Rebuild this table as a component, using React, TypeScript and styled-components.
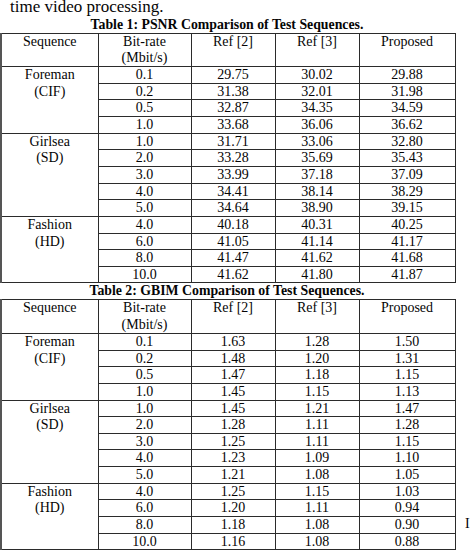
import React from "react";
import styled, { createGlobalStyle } from "styled-components";

const GlobalStyle = createGlobalStyle`
  html, body {
    margin: 0;
    padding: 0;
    background: #ffffff;
  }
  body {
    font-family: "Liberation Serif", "Times New Roman", serif;
    color: #050505;
    overflow: hidden;
  }
`;

const Page = styled.div`
  display: grid;
  grid-template-columns: 454px 1fr;
  width: 474px;
  height: 551px;
`;

const Main = styled.div`
  display: flex;
  flex-direction: column;
`;

const Side = styled.div`
  display: flex;
  flex-direction: column;
  justify-content: flex-end;
  padding: 0 0 19px 11px;
`;

const Fragment = styled.span`
  font-size: 14px;
  line-height: 16px;
`;

const Intro = styled.p`
  margin: -1.7px 0 0 10px;
  font-size: 17px;
  line-height: 17px;
  white-space: nowrap;
`;

const Caption = styled.div<{ $top: number }>`
  margin-top: ${(p) => p.$top}px;
  text-align: center;
  font-weight: bold;
  font-size: 13.8px;
  line-height: 16px;
  white-space: nowrap;
`;

const Table = styled.table`
  width: 454px;
  border-collapse: collapse;
  table-layout: fixed;
  border-left: 2px solid #555;
  font-size: 14px;
  line-height: 15.6px;
`;

const Row = styled.tr<{ $head?: boolean }>`
  height: ${(p) => (p.$head ? "33.5px" : "16.65px")};
`;

const Cell = styled.td<{ $top?: boolean }>`
  border: 1px solid #2b2b2b;
  padding: 0;
  text-align: center;
  vertical-align: ${(p) => (p.$top ? "top" : "middle")};
  white-space: nowrap;
`;

const HeadCell = styled(Cell)`
  line-height: 16.2px;
`;

const GroupCell = styled(Cell)`
  line-height: 16.65px;
`;

type Group = {
  name: string;
  format: string;
  rows: [string, string, string, string][];
};

const psnr: Group[] = [
  {
    name: "Foreman",
    format: "(CIF)",
    rows: [
      ["0.1", "29.75", "30.02", "29.88"],
      ["0.2", "31.38", "32.01", "31.98"],
      ["0.5", "32.87", "34.35", "34.59"],
      ["1.0", "33.68", "36.06", "36.62"],
    ],
  },
  {
    name: "Girlsea",
    format: "(SD)",
    rows: [
      ["1.0", "31.71", "33.06", "32.80"],
      ["2.0", "33.28", "35.69", "35.43"],
      ["3.0", "33.99", "37.18", "37.09"],
      ["4.0", "34.41", "38.14", "38.29"],
      ["5.0", "34.64", "38.90", "39.15"],
    ],
  },
  {
    name: "Fashion",
    format: "(HD)",
    rows: [
      ["4.0", "40.18", "40.31", "40.25"],
      ["6.0", "41.05", "41.14", "41.17"],
      ["8.0", "41.47", "41.62", "41.68"],
      ["10.0", "41.62", "41.80", "41.87"],
    ],
  },
];

const gbim: Group[] = [
  {
    name: "Foreman",
    format: "(CIF)",
    rows: [
      ["0.1", "1.63", "1.28", "1.50"],
      ["0.2", "1.48", "1.20", "1.31"],
      ["0.5", "1.47", "1.18", "1.15"],
      ["1.0", "1.45", "1.15", "1.13"],
    ],
  },
  {
    name: "Girlsea",
    format: "(SD)",
    rows: [
      ["1.0", "1.45", "1.21", "1.47"],
      ["2.0", "1.28", "1.11", "1.28"],
      ["3.0", "1.25", "1.11", "1.15"],
      ["4.0", "1.23", "1.09", "1.10"],
      ["5.0", "1.21", "1.08", "1.05"],
    ],
  },
  {
    name: "Fashion",
    format: "(HD)",
    rows: [
      ["4.0", "1.25", "1.15", "1.03"],
      ["6.0", "1.20", "1.11", "0.94"],
      ["8.0", "1.18", "1.08", "0.90"],
      ["10.0", "1.16", "1.08", "0.88"],
    ],
  },
];

const ResultTable: React.FC<{ groups: Group[] }> = ({ groups }) => (
  <Table>
    <colgroup>
      <col style={{ width: 97 }} />
      <col style={{ width: 93 }} />
      <col style={{ width: 84 }} />
      <col style={{ width: 84 }} />
      <col style={{ width: 96 }} />
    </colgroup>
    <tbody>
      <Row $head>
        <HeadCell $top>Sequence</HeadCell>
        <HeadCell $top>
          Bit-rate
          <br />
          (Mbit/s)
        </HeadCell>
        <HeadCell $top>Ref [2]</HeadCell>
        <HeadCell $top>Ref [3]</HeadCell>
        <HeadCell $top>Proposed</HeadCell>
      </Row>
      {groups.map((g) =>
        g.rows.map((r, i) => (
          <Row key={g.name + r[0]}>
            {i === 0 && (
              <GroupCell $top rowSpan={g.rows.length}>
                {g.name}
                <br />
                {g.format}
              </GroupCell>
            )}
            {r.map((v, j) => (
              <Cell key={j}>{v}</Cell>
            ))}
          </Row>
        ))
      )}
    </tbody>
  </Table>
);

const App: React.FC = () => (
  <>
    <GlobalStyle />
    <Page>
      <Main>
        <Intro>time video processing.</Intro>
        <Caption $top={1.3}>Table 1: PSNR Comparison of Test Sequences.</Caption>
        <ResultTable groups={psnr} />
        <Caption $top={0}>Table 2: GBIM Comparison of Test Sequences.</Caption>
        <ResultTable groups={gbim} />
      </Main>
      <Side>
        <Fragment>I</Fragment>
      </Side>
    </Page>
  </>
);

export default App;
